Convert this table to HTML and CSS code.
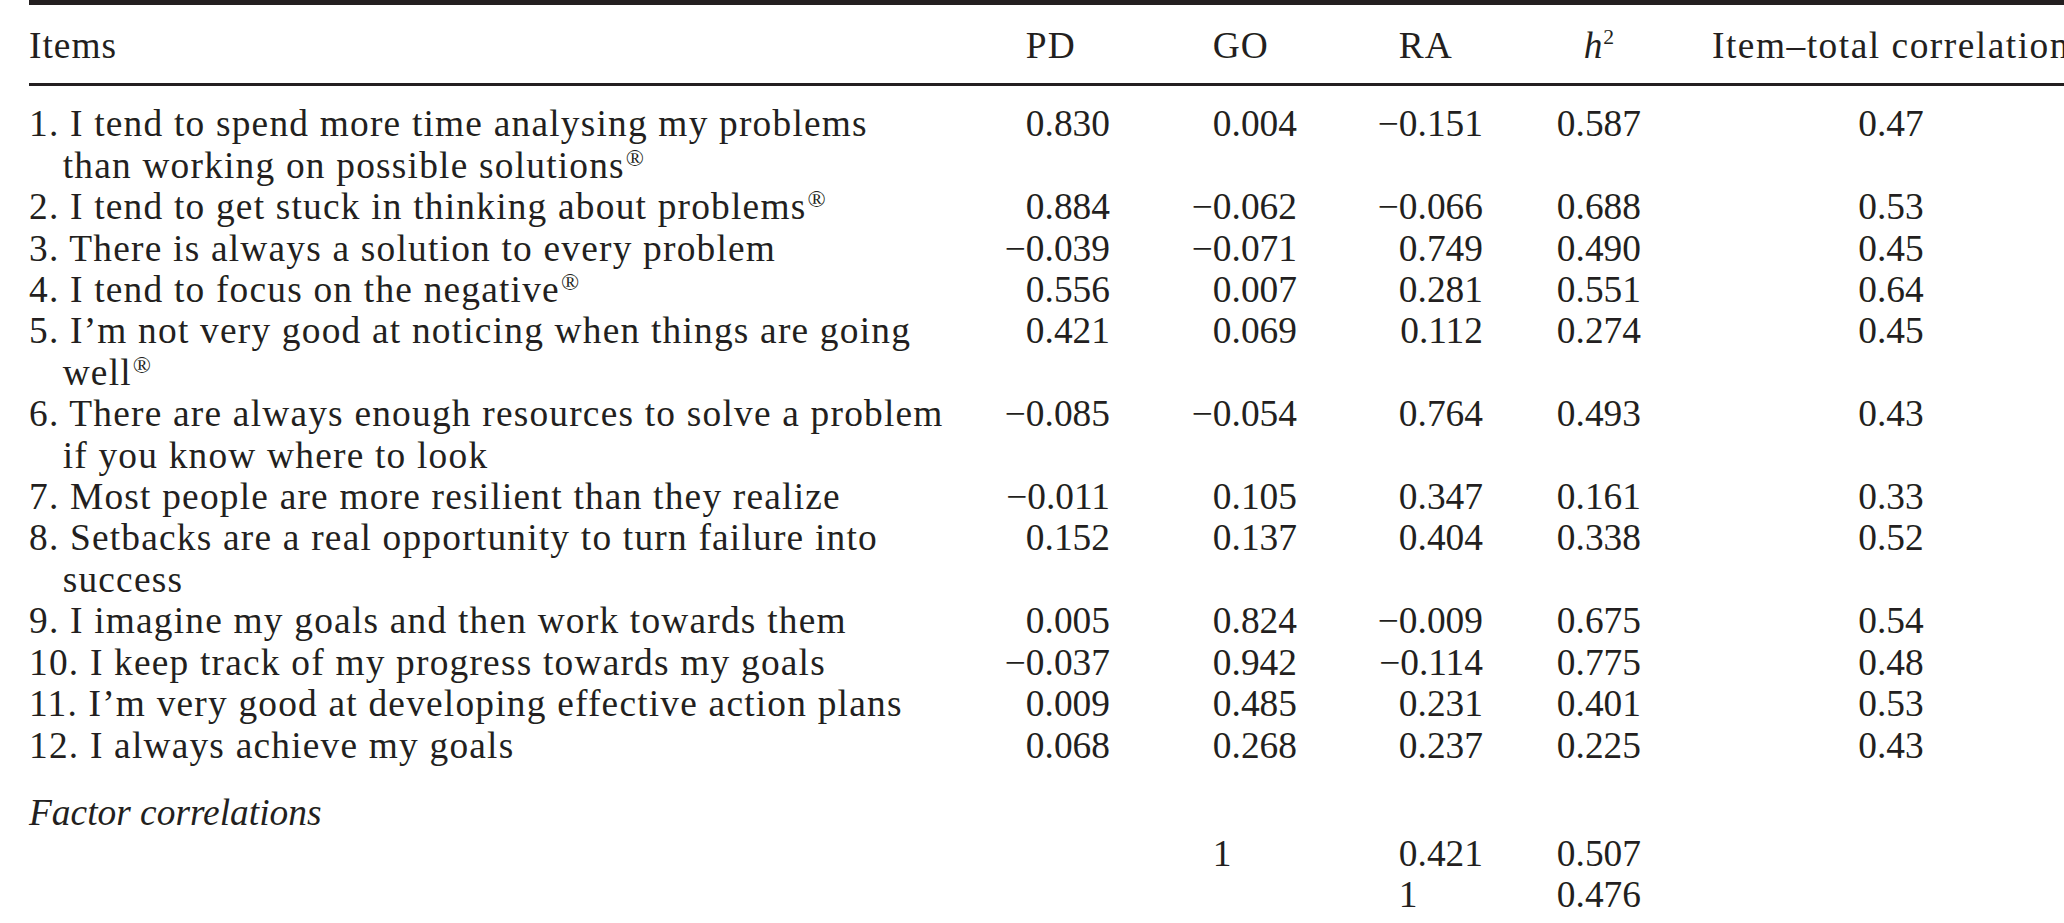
FILE: index.html
```html
<!DOCTYPE html>
<html lang="en">
<head>
<meta charset="utf-8">
<title>Factor loadings</title>
<link rel="stylesheet" href="styles.css">
</head>
<body>
<div class="page">
<table class="loadings">
<colgroup>
<col class="c-item"><col class="c-pd"><col class="c-go"><col class="c-ra"><col class="c-h2"><col class="c-itc">
</colgroup>
<thead>
<tr>
<th class="item">Items</th>
<th class="num"><span class="hd">PD</span></th>
<th class="num"><span class="hd">GO</span></th>
<th class="num"><span class="hd">RA</span></th>
<th class="num"><span class="hd center"><i>h</i><sup class="sq">2</sup></span></th>
<th class="itc">Item–total correlation</th>
</tr>
</thead>
<tbody>
<tr class="first"><td class="item">1. I tend to spend more time analysing my problems<br>than working on possible solutions<sup class="r">®</sup></td><td class="num">0.830</td><td class="num">0.004</td><td class="num">−0.151</td><td class="num">0.587</td><td class="itc">0.47</td></tr>
<tr><td class="item">2. I tend to get stuck in thinking about problems<sup class="r">®</sup></td><td class="num">0.884</td><td class="num">−0.062</td><td class="num">−0.066</td><td class="num">0.688</td><td class="itc">0.53</td></tr>
<tr><td class="item">3. There is always a solution to every problem</td><td class="num">−0.039</td><td class="num">−0.071</td><td class="num">0.749</td><td class="num">0.490</td><td class="itc">0.45</td></tr>
<tr><td class="item">4. I tend to focus on the negative<sup class="r">®</sup></td><td class="num">0.556</td><td class="num">0.007</td><td class="num">0.281</td><td class="num">0.551</td><td class="itc">0.64</td></tr>
<tr><td class="item">5. I’m not very good at noticing when things are going<br>well<sup class="r">®</sup></td><td class="num">0.421</td><td class="num">0.069</td><td class="num">0.112</td><td class="num">0.274</td><td class="itc">0.45</td></tr>
<tr><td class="item">6. There are always enough resources to solve a problem<br>if you know where to look</td><td class="num">−0.085</td><td class="num">−0.054</td><td class="num">0.764</td><td class="num">0.493</td><td class="itc">0.43</td></tr>
<tr><td class="item">7. Most people are more resilient than they realize</td><td class="num">−0.011</td><td class="num">0.105</td><td class="num">0.347</td><td class="num">0.161</td><td class="itc">0.33</td></tr>
<tr><td class="item">8. Setbacks are a real opportunity to turn failure into<br>success</td><td class="num">0.152</td><td class="num">0.137</td><td class="num">0.404</td><td class="num">0.338</td><td class="itc">0.52</td></tr>
<tr><td class="item">9. I imagine my goals and then work towards them</td><td class="num">0.005</td><td class="num">0.824</td><td class="num">−0.009</td><td class="num">0.675</td><td class="itc">0.54</td></tr>
<tr><td class="item">10. I keep track of my progress towards my goals</td><td class="num">−0.037</td><td class="num">0.942</td><td class="num">−0.114</td><td class="num">0.775</td><td class="itc">0.48</td></tr>
<tr><td class="item">11. I’m very good at developing effective action plans</td><td class="num">0.009</td><td class="num">0.485</td><td class="num">0.231</td><td class="num">0.401</td><td class="itc">0.53</td></tr>
<tr><td class="item">12. I always achieve my goals</td><td class="num">0.068</td><td class="num">0.268</td><td class="num">0.237</td><td class="num">0.225</td><td class="itc">0.43</td></tr>
<tr class="section"><td class="item"><i>Factor correlations</i></td><td class="num"></td><td class="num"></td><td class="num"></td><td class="num"></td><td class="itc"></td></tr>
<tr><td class="item"></td><td class="num"></td><td class="num"><span class="hd">1</span></td><td class="num">0.421</td><td class="num">0.507</td><td class="itc"></td></tr>
<tr><td class="item"></td><td class="num"></td><td class="num"></td><td class="num"><span class="hd">1</span></td><td class="num">0.476</td><td class="itc"></td></tr>
</tbody>
</table>
</div>
</body>
</html>
```
FILE: styles.css
```css
html, body {
  margin: 0;
  padding: 0;
  background: #ffffff;
}

body {
  overflow: hidden;
  color: #231f20;
  font-family: "Liberation Serif", "Times New Roman", serif;
  font-size: 37.4px;
}

.page {
  padding-left: 29px;
  width: 2200px;
}

.loadings {
  border-collapse: collapse;
  table-layout: fixed;
  width: 2112px;
  border-top: 5px solid #231f20;
}

.c-item { width: 971px; }
.c-pd { width: 110px; }
.c-go { width: 187px; }
.c-ra { width: 186px; }
.c-h2 { width: 158px; }
.c-itc { width: 500px; }

.loadings th,
.loadings td {
  padding: 0;
  line-height: 41.4px;
  font-weight: normal;
  vertical-align: top;
  white-space: nowrap;
}

.loadings thead th {
  padding-top: 19.5px;
  padding-bottom: 17px;
  border-bottom: 3px solid #231f20;
  letter-spacing: 1px;
}

.loadings thead th.itc {
  letter-spacing: 1.5px;
}

.loadings .item {
  text-align: left;
  padding-left: 0.9em;
  text-indent: -0.9em;
}

.loadings tbody .item {
  letter-spacing: 1.2px;
}

.loadings .item i {
  letter-spacing: 0;
}

.loadings .num {
  text-align: right;
}

.loadings .itc {
  text-align: center;
}

.hd {
  display: inline-block;
  width: 2.25em;
  text-align: left;
  text-indent: 0;
}

.hd.center {
  text-align: center;
  letter-spacing: 0;
}

.loadings tr.first td {
  padding-top: 17.5px;
}

.loadings tr.section td {
  padding-top: 25.6px;
}

sup {
  line-height: 0;
  vertical-align: 0;
  position: relative;
  letter-spacing: 0;
}

sup.r {
  font-size: 0.64em;
  top: -0.5em;
  margin-left: 1px;
}

sup.sq {
  font-size: 0.58em;
  top: -0.62em;
  margin-left: 1px;
}
```
